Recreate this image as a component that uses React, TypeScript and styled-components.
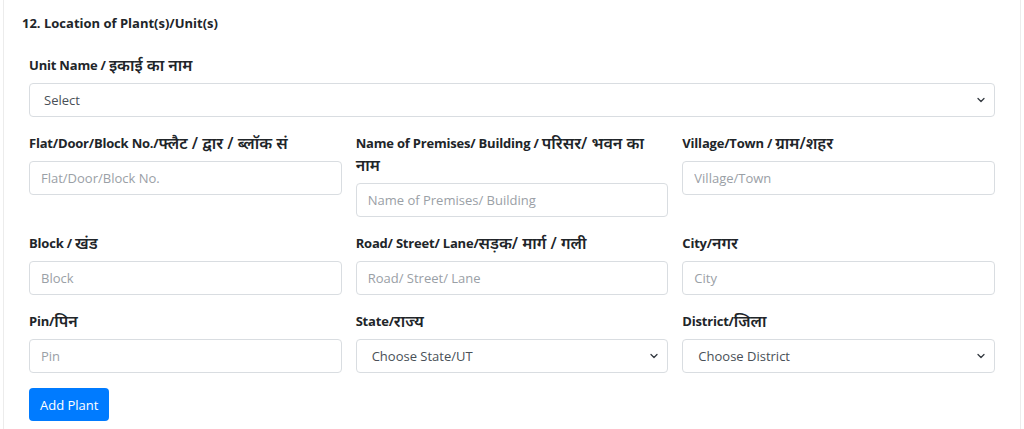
import React from 'react';
import styled, { createGlobalStyle } from 'styled-components';

const GlobalStyle = createGlobalStyle`
  html, body {
    margin: 0;
    padding: 0;
    background: #fff;
    font-family: "Open Sans", "Noto Sans", "Noto Sans Devanagari", sans-serif;
    color: #212529;
  }
  * { box-sizing: border-box; }
`;

type FieldDef = {
  en: string;
  hi: string;
  placeholder: string;
  select?: boolean;
};

const rows: FieldDef[][] = [
  [
    { en: 'Flat/Door/Block No./', hi: 'फ्लैट / द्वार / ब्लॉक सं', placeholder: 'Flat/Door/Block No.' },
    { en: 'Name of Premises/ Building / ', hi: 'परिसर/ भवन का नाम', placeholder: 'Name of Premises/ Building' },
    { en: 'Village/Town / ', hi: 'ग्राम/शहर', placeholder: 'Village/Town' },
  ],
  [
    { en: 'Block / ', hi: 'खंड', placeholder: 'Block' },
    { en: 'Road/ Street/ Lane/', hi: 'सड़क/ मार्ग / गली', placeholder: 'Road/ Street/ Lane' },
    { en: 'City/', hi: 'नगर', placeholder: 'City' },
  ],
  [
    { en: 'Pin/', hi: 'पिन', placeholder: 'Pin' },
    { en: 'State/', hi: 'राज्य', placeholder: 'Choose State/UT', select: true },
    { en: 'District/', hi: 'जिला', placeholder: 'Choose District', select: true },
  ],
];

const Chevron = () => (
  <svg width="8" height="8" viewBox="0 0 16 16">
    <path d="M2 5l6 6 6-6" fill="none" stroke="#343a40" strokeWidth="2.6" strokeLinecap="round" strokeLinejoin="round" />
  </svg>
);

const Field = ({ en, hi, placeholder, select }: FieldDef) => (
  <FieldWrap>
    <Label>
      {en}
      <Hindi>{hi}</Hindi>
    </Label>
    {select ? (
      <SelectBox>
        <SelectText $indent={15}>{placeholder}</SelectText>
        <Chevron />
      </SelectBox>
    ) : (
      <Input placeholder={placeholder} />
    )}
  </FieldWrap>
);

const App = () => {
  return (
    <>
      <GlobalStyle />
      <Card>
        <Title>12. Location of Plant(s)/Unit(s)</Title>
        <Body>
          <FieldWrap>
            <Label>
              Unit Name / <Hindi>इकाई का नाम</Hindi>
            </Label>
            <SelectBox>
              <SelectText $indent={14}>Select</SelectText>
              <Chevron />
            </SelectBox>
          </FieldWrap>
          {rows.map((row, i) => (
            <Row key={i}>
              {row.map((f) => (
                <Field key={f.placeholder} {...f} />
              ))}
            </Row>
          ))}
          <AddButton type="button">Add Plant</AddButton>
        </Body>
      </Card>
    </>
  );
};

const Card = styled.div`
  margin: -10px 3px 0 3px;
  padding: 22px 18px 20px 18px;
  border: 1px solid #ececec;
  border-radius: 4px;
  background: #fff;
  min-height: 450px;
`;

const Title = styled.div`
  font-size: 13px;
  font-weight: 700;
  line-height: 20px;
  margin-bottom: 21px;
`;

const Body = styled.div`
  padding: 0 7px;
`;

const Row = styled.div`
  display: grid;
  grid-template-columns: repeat(3, 1fr);
  column-gap: 14px;
`;

const FieldWrap = styled.div`
  display: flex;
  flex-direction: column;
  margin-bottom: 15px;
`;

const Label = styled.label`
  display: block;
  font-size: 13px;
  font-weight: 700;
  line-height: 22px;
  margin-bottom: 7px;
  letter-spacing: -0.2px;
`;

const Hindi = styled.span`
  font-size: 16px;
  font-weight: 600;
  line-height: 22px;
  vertical-align: top;
  letter-spacing: 0;
`;

const Input = styled.input`
  display: block;
  height: 34px;
  width: 100%;
  border: 1px solid #d9dde1;
  border-radius: 4px;
  padding: 0 11px;
  font-family: inherit;
  font-size: 13px;
  color: #495057;
  background: #fff;
  outline: none;
  &::placeholder {
    color: #9aa0a6;
  }
`;

const SelectBox = styled.div`
  height: 34px;
  border: 1px solid #d9dde1;
  border-radius: 4px;
  display: flex;
  align-items: center;
  justify-content: space-between;
  padding-right: 9px;
  background: #fff;
`;

const SelectText = styled.span<{ $indent: number }>`
  padding-left: ${(p) => p.$indent}px;
  font-size: 13px;
  color: #495057;
`;

const AddButton = styled.button`
  background: #007bff;
  color: #fff;
  border: none;
  border-radius: 4px;
  height: 33px;
  padding: 0 11px;
  font-family: inherit;
  font-size: 13px;
  cursor: pointer;
  &:hover {
    background: #0069d9;
  }
`;

export default App;
